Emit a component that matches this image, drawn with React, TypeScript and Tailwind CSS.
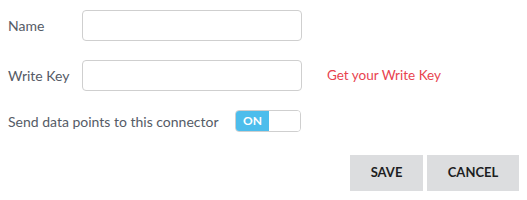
import React, { useState } from 'react';

export default function App() {
  const [enabled, setEnabled] = useState(true);

  return (
    <div className="w-[527px] h-[200px] bg-white text-[#555b66] text-[14px]" style={{ fontFamily: 'Lato, "Open Sans", sans-serif' }}>
      <div className="pt-[10px] pl-[8px] flex flex-col">
        {/* Name */}
        <div className="flex items-center h-[31px]">
          <label className="w-[74px]">Name</label>
          <input className="w-[220px] h-[31px] border border-[#cfcfcf] rounded-[4px] outline-none px-2" />
        </div>

        {/* Write Key */}
        <div className="flex items-center h-[31px] mt-[19px]">
          <label className="w-[74px]">Write Key</label>
          <input className="w-[220px] h-[31px] border border-[#cfcfcf] rounded-[4px] outline-none px-2" />
          <a className="ml-[25px] text-[#e8434f] text-[13.5px] cursor-pointer">Get your Write Key</a>
        </div>

        {/* Toggle */}
        <div className="flex items-center h-[22px] mt-[19px]">
          <label className="w-[227px]">Send data points to this connector</label>
          <button
            onClick={() => setEnabled(!enabled)}
            className="w-[66px] h-[22px] border border-[#cfcfcf] rounded-[4px] flex overflow-hidden p-0"
          >
            <span className={`w-[33px] h-full flex items-center justify-center text-white font-bold text-[12px] ${enabled ? 'bg-[#4dbdec]' : 'bg-white'}`}>
              {enabled ? 'ON' : ''}
            </span>
            <span className="flex-1 h-full bg-white" />
          </button>
        </div>

        {/* Actions */}
        <div className="flex justify-end gap-[4px] mt-[23px] pr-[8px]">
          <button className="w-[73px] h-[36px] bg-[#dcdddf] text-[#1d1d22] font-bold text-[13px]">SAVE</button>
          <button className="w-[92px] h-[36px] bg-[#dcdddf] text-[#1d1d22] font-bold text-[13px]">CANCEL</button>
        </div>
      </div>
    </div>
  );
}
